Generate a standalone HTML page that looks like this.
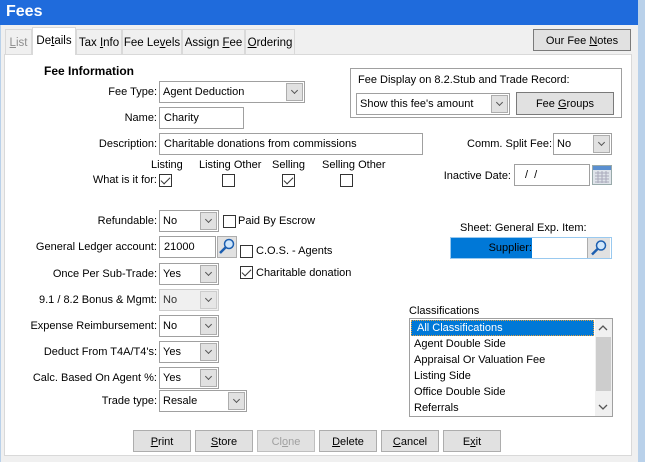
<!DOCTYPE html>
<html><head><style>
*{box-sizing:border-box;margin:0;padding:0}
body{width:645px;height:462px;background:#f0f0f0;font-family:"Liberation Sans",Arial,sans-serif;font-size:11px;color:#000;position:relative;overflow:hidden}
.a{position:absolute;white-space:nowrap}
.r{position:absolute;white-space:nowrap;text-align:right}
.in{position:absolute;background:#fff;border:1px solid #a0a0a0;padding:4px 0 0 4px;height:22px}
.sel{position:absolute;background:#fff;border:1px solid #a0a0a0;padding:4px 0 0 3px;height:22px}
.sel .dd{position:absolute;right:1px;top:1px;width:17px;height:18px;background:#e1e1e1;border:1px solid #adadad}
.sel .dd:after{content:"";position:absolute;left:5px;top:4px;width:4px;height:4px;border-right:1px solid #555;border-bottom:1px solid #555;transform:rotate(45deg)}
.cb{position:absolute;width:13px;height:13px;border:1px solid #333;background:#fff}
.cb.k:after{content:"";position:absolute;left:3px;top:0px;width:4px;height:8px;border-right:1px solid #333;border-bottom:1px solid #333;transform:rotate(45deg)}
.btn{position:absolute;background:#e1e1e1;border:1px solid #adadad;text-align:center;padding-top:5px;height:22px}
.tab{position:absolute;top:29px;height:25px;background:#f0f0f0;border:1px solid #d9d9d9;border-bottom:none;padding-top:7px;text-align:center;font-size:11.5px}
u{text-decoration:underline}
</style></head><body>
<div class="a" style="left:0;top:0;width:638px;height:25px;background:#1f6bdc"></div>
<div class="a" style="left:638px;top:0;width:7px;height:462px;background:#b9d1ea"></div>
<div class="a" style="left:0;top:25px;width:1px;height:437px;background:#b9d1ea"></div>
<div class="a" style="left:6px;top:3px;color:#fff;font-weight:bold;font-size:16px">Fees</div>

<div class="a" style="left:4px;top:54px;width:628px;height:402px;background:#fff;border:1px solid #d9d9d9"></div>
<div class="tab" style="left:5px;width:27px;color:#8d8d8d"><u>L</u>ist</div>
<div class="tab" style="left:32px;top:27px;height:28px;width:44px;background:#fff;padding-top:7px">De<u>t</u>ails</div>
<div class="tab" style="left:76px;width:46px">Tax <u>I</u>nfo</div>
<div class="tab" style="left:122px;width:60px">Fee Le<u>v</u>els</div>
<div class="tab" style="left:182px;width:63px">Assign <u>F</u>ee</div>
<div class="tab" style="left:245px;width:50px"><u>O</u>rdering</div>
<div class="btn" style="left:533px;top:29px;width:98px;height:22px;border-color:#7a7a7a">Our Fee <u>N</u>otes</div>

<div class="a" style="left:44px;top:64px;font-weight:bold;font-size:12px">Fee Information</div>
<div class="r" style="right:488px;top:86px">Fee Type:</div>
<div class="sel" style="left:159px;top:81px;width:146px">Agent Deduction<div class="dd"></div></div>
<div class="r" style="right:488px;top:112px">Name:</div>
<div class="in" style="left:159px;top:107px;width:85px">Charity</div>
<div class="r" style="right:488px;top:138px">Description:</div>
<div class="in" style="left:159px;top:133px;width:264px">Charitable donations from commissions</div>

<div class="a" style="left:350px;top:68px;width:272px;height:50px;border:1px solid #a0a0a0"></div>
<div class="a" style="left:358px;top:74px">Fee Display on 8.2.Stub and Trade Record:</div>
<div class="sel" style="left:356px;top:93px;width:154px">Show this fee's amount<div class="dd"></div></div>
<div class="btn" style="left:516px;top:92px;width:98px;height:23px;border-color:#7a7a7a">Fee <u>G</u>roups</div>

<div class="r" style="right:93px;top:138px">Comm. Split Fee:</div>
<div class="sel" style="left:553px;top:133px;width:59px">No<div class="dd"></div></div>

<div class="a" style="left:151px;top:159px">Listing</div>
<div class="a" style="left:199px;top:159px">Listing Other</div>
<div class="a" style="left:272px;top:159px">Selling</div>
<div class="a" style="left:322px;top:159px">Selling Other</div>
<div class="r" style="right:488px;top:174px">What is it for:</div>
<div class="cb k" style="left:159px;top:174px"></div>
<div class="cb" style="left:222px;top:174px"></div>
<div class="cb k" style="left:282px;top:174px"></div>
<div class="cb" style="left:340px;top:174px"></div>

<div class="r" style="right:134px;top:170px">Inactive Date:</div>
<div class="in" style="left:514px;top:164px;width:76px;padding-left:10px">/ &nbsp;/</div>
<svg class="a" style="left:592px;top:165px" width="20" height="20"><rect x="0.5" y="0.5" width="19" height="19" fill="#dfe4ea" stroke="#9aa"/><rect x="1" y="1" width="18" height="4" fill="#5a8fd0"/><g stroke="#aab" stroke-width="1"><line x1="3" y1="8" x2="17" y2="8"/><line x1="3" y1="11" x2="17" y2="11"/><line x1="3" y1="14" x2="17" y2="14"/><line x1="3" y1="17" x2="17" y2="17"/><line x1="6" y1="6" x2="6" y2="18"/><line x1="10" y1="6" x2="10" y2="18"/><line x1="14" y1="6" x2="14" y2="18"/></g></svg>

<div class="r" style="right:488px;top:215px">Refundable:</div>
<div class="sel" style="left:159px;top:210px;width:60px">No<div class="dd"></div></div>
<div class="cb" style="left:223px;top:215px"></div>
<div class="a" style="left:238px;top:215px">Paid By Escrow</div>

<div class="r" style="right:488px;top:241px">General Ledger account:</div>
<div class="in" style="left:159px;top:236px;width:57px">21000</div>
<svg class="a" style="left:217px;top:236px" width="20" height="22"><rect x="0.5" y="0.5" width="19" height="21" fill="#e1e1e1" stroke="#adadad"/><circle cx="12" cy="8" r="4.5" fill="#cfe6fb" stroke="#1d5fb0" stroke-width="1.5"/><line x1="9" y1="11" x2="3" y2="17" stroke="#1d5fb0" stroke-width="2.5"/></svg>
<div class="cb" style="left:240px;top:245px"></div>
<div class="a" style="left:256px;top:245px">C.O.S. - Agents</div>

<div class="r" style="right:488px;top:268px">Once Per Sub-Trade:</div>
<div class="sel" style="left:159px;top:263px;width:60px">Yes<div class="dd"></div></div>
<div class="cb k" style="left:240px;top:266px"></div>
<div class="a" style="left:256px;top:267px">Charitable donation</div>

<div class="r" style="right:488px;top:294px">9.1 / 8.2 Bonus &amp; Mgmt:</div>
<div class="sel" style="left:159px;top:289px;width:60px;background:#f0f0f0;border-color:#ccc;color:#333">No<div class="dd" style="border-color:#ccc;background:#e6e6e6"></div></div>
<div class="r" style="right:488px;top:320px">Expense Reimbursement:</div>
<div class="sel" style="left:159px;top:315px;width:60px">No<div class="dd"></div></div>
<div class="r" style="right:488px;top:346px">Deduct From T4A/T4's:</div>
<div class="sel" style="left:159px;top:341px;width:60px">Yes<div class="dd"></div></div>
<div class="r" style="right:488px;top:372px">Calc. Based On Agent %:</div>
<div class="sel" style="left:159px;top:367px;width:60px">Yes<div class="dd"></div></div>
<div class="r" style="right:488px;top:395px">Trade type:</div>
<div class="sel" style="left:159px;top:390px;width:88px">Resale<div class="dd"></div></div>

<div class="a" style="left:460px;top:222px">Sheet: General Exp. Item:</div>
<div class="a" style="left:450px;top:237px;width:162px;height:22px;border:1px solid #99c9ef;background:#fff"></div>
<div class="a" style="left:451px;top:238px;width:81px;height:20px;background:#0078d7;text-align:right;padding-top:4px;color:#000">Supplier:</div>
<div class="a" style="left:532px;top:238px;width:56px;height:20px;border-right:1px solid #adadad"></div>
<svg class="a" style="left:588px;top:238px" width="22" height="20"><rect x="0" y="0" width="22" height="20" fill="#e1e1e1"/><circle cx="13" cy="7.5" r="4.5" fill="#cfe6fb" stroke="#1d5fb0" stroke-width="1.5"/><line x1="10" y1="10.5" x2="4" y2="16.5" stroke="#1d5fb0" stroke-width="2.5"/></svg>

<div class="a" style="left:409px;top:305px">Classifications</div>
<div class="a" style="left:409px;top:318px;width:204px;height:99px;border:1px solid #a0a0a0;background:#fff"></div>
<div class="a" style="left:411px;top:320px;width:183px;height:16px;background:#0078d7;color:#fff;padding:2px 0 0 6px;outline:1px dotted #e0a040;outline-offset:-1px">All Classifications</div>
<div class="a" style="left:414px;top:338px">Agent Double Side</div>
<div class="a" style="left:414px;top:354px">Appraisal Or Valuation Fee</div>
<div class="a" style="left:414px;top:370px">Listing Side</div>
<div class="a" style="left:414px;top:386px">Office Double Side</div>
<div class="a" style="left:414px;top:402px">Referrals</div>
<div class="a" style="left:595px;top:319px;width:17px;height:97px;background:#f0f0f0"></div>
<div class="a" style="left:596px;top:337px;width:15px;height:54px;background:#cdcdcd"></div>
<svg class="a" style="left:598px;top:324px" width="10" height="8"><path d="M1 6 L5 2 L9 6" fill="none" stroke="#555" stroke-width="1.3"/></svg>
<svg class="a" style="left:598px;top:403px" width="10" height="8"><path d="M1 2 L5 6 L9 2" fill="none" stroke="#555" stroke-width="1.3"/></svg>

<div class="btn" style="left:133px;top:430px;width:58px"><u>P</u>rint</div>
<div class="btn" style="left:195px;top:430px;width:58px"><u>S</u>tore</div>
<div class="btn" style="left:257px;top:430px;width:58px;color:#a0a0a0;border-color:#bfbfbf">Cl<u>o</u>ne</div>
<div class="btn" style="left:319px;top:430px;width:58px"><u>D</u>elete</div>
<div class="btn" style="left:381px;top:430px;width:58px"><u>C</u>ancel</div>
<div class="btn" style="left:443px;top:430px;width:58px">E<u>x</u>it</div>
</body></html>
